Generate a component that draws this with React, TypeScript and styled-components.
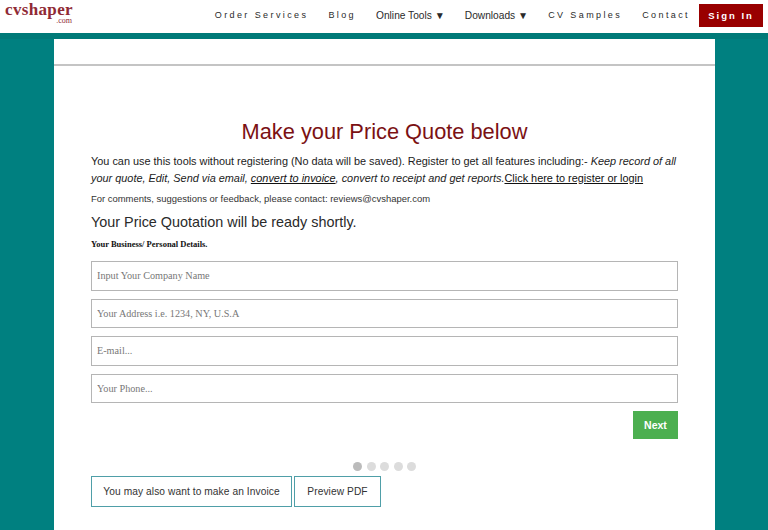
import styled, { createGlobalStyle } from 'styled-components';

const GlobalStyle = createGlobalStyle`
  html, body {
    margin: 0;
    padding: 0;
    height: 530px;
    overflow: hidden;
    background: #008080;
    font-family: "Liberation Sans", Arial, sans-serif;
    color: #222;
  }
  * { box-sizing: border-box; }
`;

const Header = styled.header`
  height: 33px;
  background: #fff;
  display: flex;
  align-items: center;
  justify-content: space-between;
  padding: 0 5px 0 5px;
`;
const Logo = styled.div`
  display: flex;
  flex-direction: column;
  align-items: flex-end;
  margin-top: -8px;
  font-family: "Liberation Serif", serif;
  font-weight: 700;
  color: #8f2a35;
  font-size: 17px;
  line-height: 16px;
  letter-spacing: 0.35px;
`;
const LogoCom = styled.span`
  font-size: 8px;
  line-height: 5px;
  font-weight: 400;
  letter-spacing: 0;
  margin-right: 1px;
`;
const Nav = styled.nav`
  display: flex;
  align-items: center;
  gap: 20px;
  margin-top: -3px;
`;
const NavLink = styled.a<{ $plain?: boolean }>`
  font-size: ${(props) => (props.$plain ? '10.2px' : '9px')};
  letter-spacing: ${(props) => (props.$plain ? '0' : '2.4px')};
  color: #2a2a2a;
  white-space: nowrap;
`;
const SignIn = styled.button`
  margin-left: -11px;
  width: 64px;
  height: 23px;
  border: none;
  background: #990000;
  color: #fff;
  font-family: "Liberation Sans", Arial, sans-serif;
  font-size: 9.5px;
  font-weight: 700;
  letter-spacing: 2px;
`;
const Main = styled.main`
  background: #008080;
  padding: 6px 53px 0 54px;
  box-shadow: inset 0 6px 0 #007a78;
`;
const Card = styled.section`
  background: #fff;
  height: 491px;
  padding-top: 25px;
`;
const Rule = styled.hr`
  margin: 0;
  border: none;
  height: 2px;
  background: #c4c4c4;
`;
const Content = styled.div`
  padding: 52px 37px 0;
`;
const Title = styled.h1`
  margin: 0;
  text-align: center;
  font-weight: 400;
  font-size: 21.8px;
  line-height: 27px;
  color: #7b1113;
`;
const Intro = styled.p`
  margin: 8px 0 0;
  font-size: 10.9px;
  line-height: 17px;
  white-space: nowrap;
`;
const Link = styled.a`
  text-decoration: underline;
  color: #111;
`;
const Feedback = styled.p`
  margin: 5px 0 0;
  font-size: 9.45px;
  line-height: 14px;
  color: #333;
`;
const Ready = styled.h2`
  margin: 6px 0 0;
  font-weight: 400;
  font-size: 14.4px;
  line-height: 20px;
  color: #2a2a2a;
`;
const SectionLabel = styled.div`
  margin-top: 6px;
  font-family: "Liberation Serif", serif;
  font-weight: 700;
  font-size: 8.5px;
  line-height: 12px;
  color: #111;
`;
const Fields = styled.div`
  margin-top: 11px;
  display: flex;
  flex-direction: column;
  gap: 8px;
`;
const Field = styled.input`
  display: block;
  width: 100%;
  height: 29.5px;
  padding: 0 5px;
  border: 1px solid #b5b5b5;
  border-radius: 0;
  outline: none;
  background: #fff;
  font-family: "Liberation Serif", serif;
  font-size: 10.2px;
  &::placeholder { color: #777; opacity: 1; }
`;
const NextRow = styled.div`
  display: flex;
  justify-content: flex-end;
  margin-top: 8px;
`;
const NextButton = styled.button`
  width: 45px;
  height: 28px;
  border: none;
  background: #4caf50;
  color: #fff;
  font-family: "Liberation Sans", Arial, sans-serif;
  font-size: 10.5px;
  font-weight: 700;
`;
const Dots = styled.div`
  display: flex;
  justify-content: center;
  gap: 4.5px;
  margin-top: 23px;
`;
const Dot = styled.span<{ $active?: boolean }>`
  width: 9px;
  height: 9px;
  border-radius: 50%;
  background: ${(props) => (props.$active ? '#bbb' : '#dcdcdc')};
`;
const Actions = styled.div`
  display: flex;
  gap: 2px;
  margin-top: 5px;
`;
const ActionButton = styled.button<{ $width: number }>`
  width: ${(props) => props.$width}px;
  height: 31px;
  padding: 0;
  border: 1px solid #4f9fa8;
  border-radius: 0;
  background: #fff;
  color: #333;
  font-family: "Liberation Sans", Arial, sans-serif;
  font-size: 10.2px;
  letter-spacing: 0.08px;
`;

const fields = [
  'Input Your Company Name',
  'Your Address i.e. 1234, NY, U.S.A',
  'E-mail...',
  'Your Phone...',
];

export default function App() {
  return (
    <>
      <GlobalStyle />
      <Header>
        <Logo>
          cvshaper
          <LogoCom>.com</LogoCom>
        </Logo>
        <Nav>
          <NavLink>Order Services</NavLink>
          <NavLink>Blog</NavLink>
          <NavLink $plain>Online Tools ▼</NavLink>
          <NavLink $plain>Downloads ▼</NavLink>
          <NavLink>CV Samples</NavLink>
          <NavLink>Contact</NavLink>
          <SignIn>Sign In</SignIn>
        </Nav>
      </Header>
      <Main>
        <Card>
          <Rule />
          <Content>
            <Title>Make your Price Quote below</Title>
            <Intro>
              You can use this tools without registering (No data will be saved). Register to get all features including:- <em>Keep record of all</em>
              <br />
              <em>
                your quote, Edit, Send via email, <Link>convert to invoice</Link>, convert to receipt and get reports.
              </em>
              <Link>Click here to register or login</Link>
            </Intro>
            <Feedback>For comments, suggestions or feedback, please contact: reviews@cvshaper.com</Feedback>
            <Ready>Your Price Quotation will be ready shortly.</Ready>
            <SectionLabel>Your Business/ Personal Details.</SectionLabel>
            <Fields>
              {fields.map((text) => (
                <Field key={text} placeholder={text} />
              ))}
            </Fields>
            <NextRow>
              <NextButton>Next</NextButton>
            </NextRow>
            <Dots>
              <Dot $active />
              <Dot />
              <Dot />
              <Dot />
              <Dot />
            </Dots>
            <Actions>
              <ActionButton $width={201}>You may also want to make an Invoice</ActionButton>
              <ActionButton $width={87}>Preview PDF</ActionButton>
            </Actions>
          </Content>
        </Card>
      </Main>
    </>
  );
}
